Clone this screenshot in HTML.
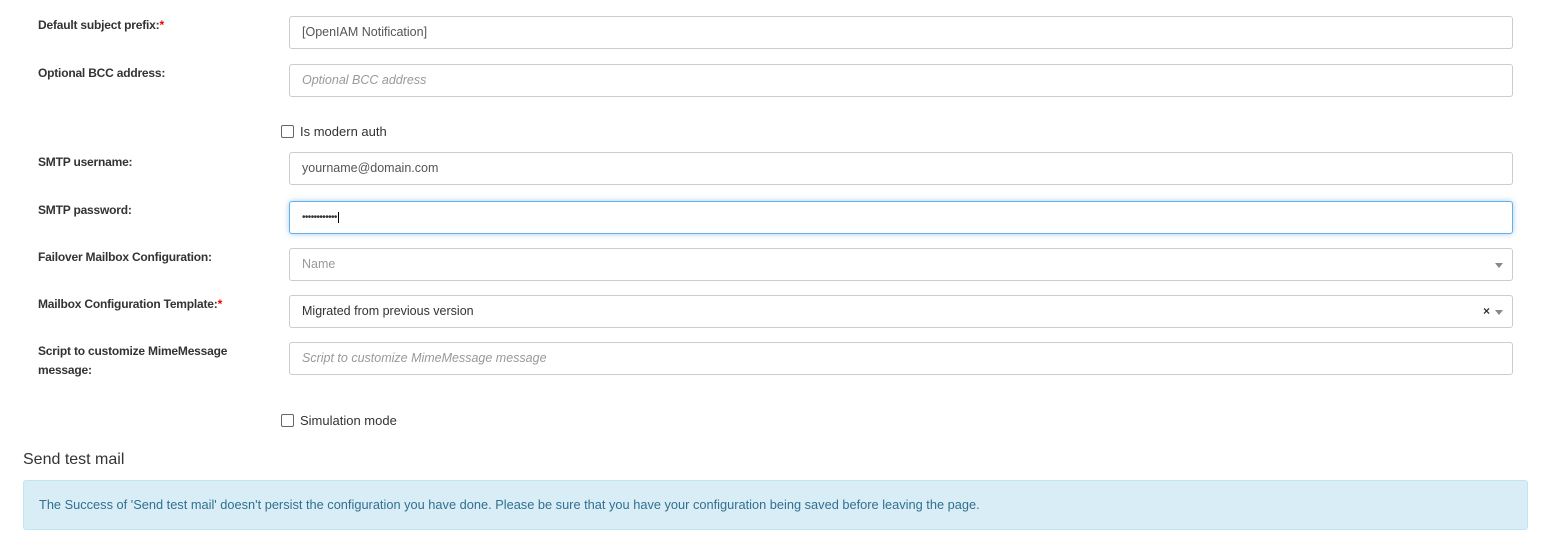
<!DOCTYPE html><html><head><style>
body{margin:0;width:1553px;height:557px;background:#fff;font-family:"Liberation Sans",sans-serif;position:relative;overflow:hidden;color:#333}
.l{position:absolute;left:38px;font-size:12px;font-weight:bold;color:#333;line-height:19px;letter-spacing:-0.2px}
.l b{color:#e00}
.i{position:absolute;left:289px;border:1px solid #ccc;border-radius:3px;font-size:12.5px;line-height:31px;padding-left:12px;box-sizing:border-box;width:1224px;height:33px;color:#555}
.p{color:#999;font-style:italic}
.cb{position:absolute;left:281px;width:11px;height:11px;border:1px solid #666;border-radius:2px}
.ct{position:absolute;left:300px;font-size:13px;color:#333}
.arr{position:absolute;right:9px;top:14px;border-left:4px solid transparent;border-right:4px solid transparent;border-top:5px solid #888}
</style></head><body>
<div class="l" style="top:16px">Default subject prefix:<b>*</b></div>
<div class="i" style="top:16px">[OpenIAM Notification]</div>
<div class="l" style="top:64px">Optional BCC address:</div>
<div class="i p" style="top:64px">Optional BCC address</div>
<div class="cb" style="top:125px"></div><div class="ct" style="top:124px">Is modern auth</div>
<div class="l" style="top:153px">SMTP username:</div>
<div class="i" style="top:152px">yourname@domain.com</div>
<div class="l" style="top:201px">SMTP password:</div>
<div class="i" style="top:201px;border-color:#66afe9;box-shadow:0 0 6px rgba(102,175,233,.6);color:#333;font-size:10px;letter-spacing:-0.6px">••••••••••••<span style="border-left:1px solid #000;margin-left:1px">&nbsp;</span></div>
<div class="l" style="top:248px">Failover Mailbox Configuration:</div>
<div class="i" style="top:248px;color:#999">Name<div class="arr"></div></div>
<div class="l" style="top:295px">Mailbox Configuration Template:<b>*</b></div>
<div class="i" style="top:295px;color:#333">Migrated from previous version<span style="position:absolute;right:22px;top:0;font-size:12px;font-weight:bold;color:#333">×</span><div class="arr"></div></div>
<div class="l" style="top:342px">Script to customize MimeMessage<br>message:</div>
<div class="i p" style="top:342px">Script to customize MimeMessage message</div>
<div class="cb" style="top:414px"></div><div class="ct" style="top:413px">Simulation mode</div>
<div style="position:absolute;left:23px;top:451px;font-size:16px;color:#333">Send test mail</div>
<div style="position:absolute;left:23px;top:480px;width:1505px;height:50px;box-sizing:border-box;background:#d9edf7;border:1px solid #bce8f1;border-radius:3px;color:#31708f;font-size:12.8px;line-height:48px;padding-left:15px">The Success of 'Send test mail' doesn't persist the configuration you have done. Please be sure that you have your configuration being saved before leaving the page.</div>
</body></html>
